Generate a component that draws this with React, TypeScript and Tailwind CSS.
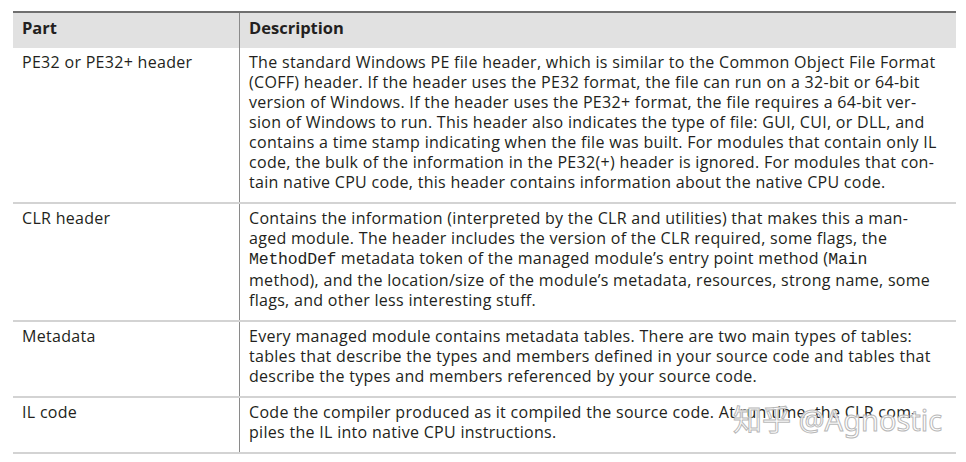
import React from "react"

type Row = {
  part: string
  lines: React.ReactNode[]
}

const Mono = ({ children }: { children: React.ReactNode }) => (
  <span className="font-['Liberation_Mono',monospace] text-[16.5px] tracking-[-0.2px]">{children}</span>
)

const ROWS: Row[] = [
  {
    part: "PE32 or PE32+ header",
    lines: [
      "The standard Windows PE file header, which is similar to the Common Object File Format",
      "(COFF) header. If the header uses the PE32 format, the file can run on a 32-bit or 64-bit",
      "version of Windows. If the header uses the PE32+ format, the file requires a 64-bit ver-",
      "sion of Windows to run. This header also indicates the type of file: GUI, CUI, or DLL, and",
      "contains a time stamp indicating when the file was built. For modules that contain only IL",
      "code, the bulk of the information in the PE32(+) header is ignored. For modules that con-",
      "tain native CPU code, this header contains information about the native CPU code.",
    ],
  },
  {
    part: "CLR header",
    lines: [
      "Contains the information (interpreted by the CLR and utilities) that makes this a man-",
      "aged module. The header includes the version of the CLR required, some flags, the",
      <>
        <Mono>MethodDef</Mono> metadata token of the managed module’s entry point method (<Mono>Main</Mono>
      </>,
      "method), and the location/size of the module’s metadata, resources, strong name, some",
      "flags, and other less interesting stuff.",
    ],
  },
  {
    part: "Metadata",
    lines: [
      "Every managed module contains metadata tables. There are two main types of tables:",
      "tables that describe the types and members defined in your source code and tables that",
      "describe the types and members referenced by your source code.",
    ],
  },
  {
    part: "IL code",
    lines: [
      "Code the compiler produced as it compiled the source code. At run time, the CLR com-",
      "piles the IL into native CPU instructions.",
    ],
  },
]

export default function App() {
  return (
    <div className="relative w-[966px] h-[462px] bg-white pt-[11px] pl-[13px] font-['Open_Sans',sans-serif] text-[#231f20] overflow-hidden">
      <div className="w-[943px] border-t-2 border-[#6f6f6f]">
        <div className="grid grid-cols-[227px_1fr] bg-[#e1e1e1] h-[35px]">
          <div className="border-r border-[#8a8a8a] pl-[9px] pb-[5px] flex items-center font-bold text-[16.5px]">Part</div>
          <div className="pl-[9px] pb-[5px] flex items-center font-bold text-[16.5px]">Description</div>
        </div>
        {ROWS.map((row) => (
          <div key={row.part} className="grid grid-cols-[227px_1fr] border-b-2 border-[#d3d3d3]">
            <div className="border-r border-[#8a8a8a] pl-[9px] pt-[4px] pb-[10px] text-[16px] leading-[20px] tracking-[0.3px]">
              {row.part}
            </div>
            <div className="pl-[9px] pt-[4px] pb-[10px] text-[16px] leading-[20px] tracking-[0.3px]">
              {row.lines.map((line, i) => (
                <div key={i} className="whitespace-nowrap">
                  {line}
                </div>
              ))}
            </div>
          </div>
        ))}
      </div>
      <div className="absolute left-[733px] top-[401px] text-[29px] leading-[38px] text-white/85 [-webkit-text-stroke:1px_#b8b8b8] font-['Noto_Sans','Noto_Sans_CJK_SC',sans-serif] whitespace-nowrap">
        知乎 @Agnostic
      </div>
    </div>
  )
}
